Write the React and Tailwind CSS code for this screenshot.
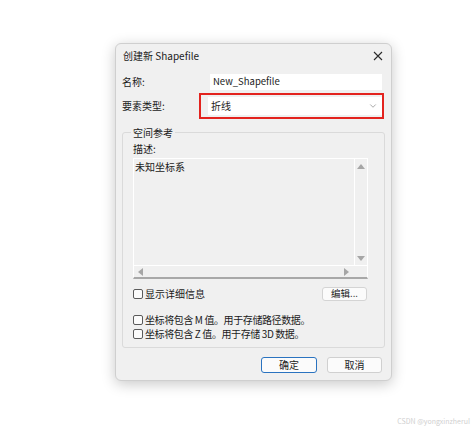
import { ChevronDown } from "lucide-react";

const font = { fontFamily: '"Noto Sans CJK SC", "Noto Sans", sans-serif' };

const Checkbox = () => (
    <span className="w-[10px] h-[10px] border border-[#5a5a5a] rounded-[2px] bg-[#fbfbfb] shrink-0" />
);

const Tri = ({ dir }) => {
    const pts = {
        up: "0,5 4,0 8,5",
        down: "0,0 8,0 4,5",
        left: "5,0 5,8 0,4",
        right: "0,0 0,8 5,4",
    }[dir];
    const vertical = dir === "up" || dir === "down";
    return (
        <svg width={vertical ? 8 : 5} height={vertical ? 5 : 8} viewBox={vertical ? "0 0 8 5" : "0 0 5 8"}>
            <polygon points={pts} fill="#a6a6a6" />
        </svg>
    );
};

export default function App() {
    return (
        <div className="w-[474px] h-[431px] bg-white overflow-hidden pt-[43px] pl-[115px] text-[#1b1b1b]" style={font}>
            {/* 对话框 */}
            <div className="w-[277px] h-[338px] bg-[#f0f0f0] rounded-[6px] border border-[#cfcfcf] shadow-[0_3px_14px_rgba(0,0,0,0.22)] flex flex-col">
                {/* 标题栏 */}
                <div className="h-[23px] flex items-center justify-between pl-[7px] pr-[8px]">
                    <span className="text-[10px] leading-none">创建新 Shapefile</span>
                    <svg width="10" height="10" viewBox="0 0 10 10" className="mt-[1px]">
                        <path d="M1 1 L9 9 M9 1 L1 9" stroke="#2a2a2a" strokeWidth="1.1" />
                    </svg>
                </div>

                {/* 名称 */}
                <div className="mt-[7px] h-[16px] flex items-center">
                    <span className="w-[94px] pl-[6px] text-[10px] leading-none">名称:</span>
                    <div className="w-[172px] h-[16px] bg-white flex items-center pl-[3px] text-[9.5px] leading-none">
                        New_Shapefile
                    </div>
                </div>

                {/* 要素类型 */}
                <div className="mt-[3px] h-[26px] flex items-center">
                    <span className="w-[83px] pl-[6px] text-[10px] leading-none">要素类型:</span>
                    <div className="w-[185px] h-[26px] border-2 border-[#e3231e] flex items-center pl-[7px]">
                        <div className="w-[174px] h-[18px] bg-white flex items-center justify-between pl-[3px] pr-[4px]">
                            <span className="text-[10px] leading-none">折线</span>
                            <ChevronDown size={10} strokeWidth={1.2} color="#555" />
                        </div>
                    </div>
                </div>

                {/* 空间参考 */}
                <fieldset className="mt-[6px] mx-[6px] w-[262px] border border-[#dadada] rounded-[3px] pl-[10px] pr-[16px] pb-[7px]">
                    <legend className="-ml-[2px] px-[2px] text-[10px] leading-[15px]">空间参考</legend>
                    <div className="mt-[2px] text-[10px] leading-[14px]">描述:</div>
                    <div className="mt-[2px] w-[235px] h-[121px] border border-white border-b-2 border-b-[#a8a8a8] flex flex-col">
                        <div className="flex-1 flex">
                            <div className="flex-1 px-[1px] pt-[1px] text-[10px] leading-[14px]">未知坐标系</div>
                            <div className="w-[13px] border-l border-white flex flex-col items-center justify-between pt-[5px] pb-[4px]">
                                <Tri dir="up" />
                                <Tri dir="down" />
                            </div>
                        </div>
                        <div className="h-[12px] flex items-center justify-between pl-[4px] pr-[18px] border-t border-white">
                            <Tri dir="left" />
                            <Tri dir="right" />
                        </div>
                    </div>

                    <div className="mt-[8px] h-[14px] flex items-center justify-between">
                        <label className="flex items-center gap-[2px] text-[10px] leading-none">
                            <Checkbox />
                            显示详细信息
                        </label>
                        <button className="w-[45px] h-[14px] mr-[1px] bg-[#fbfbfb] border border-[#d4d4d4] rounded-[3px] text-[9.5px] leading-none">
                            编辑...
                        </button>
                    </div>

                    <label className="mt-[12px] h-[13px] flex items-center gap-[2px] text-[10px] leading-none whitespace-nowrap">
                        <Checkbox />
                        <span className="tracking-[-0.4px]">坐标将包含 M 值。用于存储路径数据。</span>
                    </label>
                    <label className="mt-[1px] h-[13px] flex items-center gap-[2px] text-[10px] leading-none whitespace-nowrap">
                        <Checkbox />
                        <span className="tracking-[-0.4px]">坐标将包含 Z 值。用于存储 3D 数据。</span>
                    </label>
                </fieldset>

                {/* 按钮 */}
                <div className="mt-[9px] flex justify-end gap-[10px] pr-[9px]">
                    <button className="w-[56px] h-[16px] bg-[#fbfbfb] border border-[#2a73c0] rounded-[3px] text-[10px] leading-none">
                        确定
                    </button>
                    <button className="w-[55px] h-[16px] bg-[#fbfbfb] border border-[#d0d0d0] rounded-[3px] text-[10px] leading-none">
                        取消
                    </button>
                </div>
            </div>

            {/* 水印 */}
            <div className="mt-[36px] w-[355px] flex justify-end text-[7px] leading-[8px] text-[#cfcfcf]">
                CSDN @yongxinzheruI
            </div>
        </div>
    );
}
